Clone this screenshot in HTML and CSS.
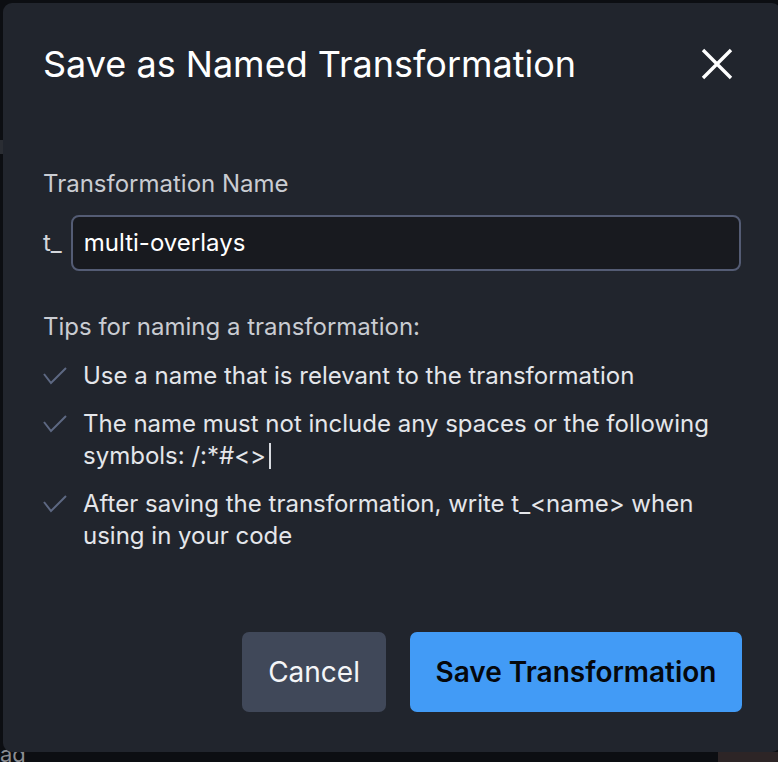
FILE: index.html
```html
<!DOCTYPE html>
<html lang="en">
<head>
<meta charset="utf-8">
<title>Save as Named Transformation</title>
<link rel="stylesheet" href="styles.css">
</head>
<body>
<div class="backdrop">
  <div class="bg-strip"></div>
  <div class="bg-text">ad</div>
  <div class="bg-block"></div>
</div>
<div class="modal" role="dialog" aria-labelledby="dlg-title">
  <div class="modal-header">
    <h1 id="dlg-title" class="modal-title">Save as Named Transformation</h1>
    <button class="close-btn" aria-label="Close">
      <svg viewBox="0 0 32 32" width="32" height="32"><path d="M2 2 L30 30 M30 2 L2 30" stroke="#ffffff" stroke-width="3.4" fill="none"/></svg>
    </button>
  </div>
  <label class="field-label" for="tname">Transformation Name</label>
  <div class="field-row">
    <span class="prefix">t_</span>
    <div class="input-box" id="tname">multi-overlays</div>
  </div>
  <div class="tips-title">Tips for naming a transformation:</div>
  <ul class="tips">
    <li class="tip">
      <svg class="check" viewBox="0 0 24 20" width="24" height="20"><polyline points="1,8 8,17 23,2" fill="none" stroke="#5d6882" stroke-width="2"/></svg>
      <span class="tip-text">Use a name that is relevant to the transformation</span>
    </li>
    <li class="tip">
      <svg class="check" viewBox="0 0 24 20" width="24" height="20"><polyline points="1,8 8,17 23,2" fill="none" stroke="#5d6882" stroke-width="2"/></svg>
      <span class="tip-text">The name must not include any spaces or the following symbols: /:*#&lt;&gt;<span class="caret"></span></span>
    </li>
    <li class="tip">
      <svg class="check" viewBox="0 0 24 20" width="24" height="20"><polyline points="1,8 8,17 23,2" fill="none" stroke="#5d6882" stroke-width="2"/></svg>
      <span class="tip-text">After saving the transformation, write t_&lt;name&gt; when using in your code</span>
    </li>
  </ul>
  <div class="modal-footer">
    <button class="btn btn-cancel">Cancel</button>
    <button class="btn btn-save">Save Transformation</button>
  </div>
</div>
</body>
</html>
```

FILE: styles.css
```css
html, body {
  margin: 0;
  padding: 0;
  width: 778px;
  height: 762px;
  overflow: hidden;
  background: #0c0e12;
  font-family: Inter, "Noto Sans", "Liberation Sans", sans-serif;
}

.backdrop {
  position: relative;
  width: 778px;
  height: 762px;
}

.bg-strip {
  position: absolute;
  left: 0;
  top: 140px;
  width: 3px;
  height: 14px;
  background: #2a2d33;
}

.bg-text {
  position: absolute;
  left: 0;
  top: 741px;
  font-size: 22px;
  line-height: 26px;
  color: #8a8d93;
}

.bg-block {
  position: absolute;
  left: 718px;
  top: 752px;
  width: 60px;
  height: 10px;
  background: #2d2526;
}

.modal {
  position: absolute;
  left: 3px;
  top: 3px;
  width: 778px;
  height: 749px;
  box-sizing: border-box;
  padding: 40px;
  background: #21252d;
  border-radius: 9px;
  display: flex;
  flex-direction: column;
}

.modal-header {
  display: flex;
  align-items: center;
  justify-content: space-between;
  margin-bottom: 83px;
}

.modal-title {
  margin: 0;
  font-size: 36px;
  line-height: 42px;
  font-weight: 400;
  color: #ffffff;
}

.close-btn {
  width: 32px;
  height: 32px;
  padding: 0;
  margin-right: 8px;
  border: 0;
  background: transparent;
  display: flex;
}

.field-label {
  display: block;
  font-size: 24px;
  line-height: 32px;
  color: #c9ccd2;
  margin-bottom: 15px;
}

.field-row {
  display: flex;
  align-items: center;
  gap: 9px;
}

.prefix {
  font-size: 24px;
  line-height: 32px;
  color: #d4d7dc;
}

.input-box {
  flex: 1;
  height: 56px;
  box-sizing: border-box;
  border: 2px solid #545c74;
  border-radius: 8px;
  background: #181a1f;
  padding: 0 11px;
  display: flex;
  align-items: center;
  font-size: 24px;
  line-height: 32px;
  color: #ffffff;
}

.tips-title {
  margin-top: 40px;
  font-size: 24px;
  line-height: 32px;
  color: #c9ccd2;
}

.tips {
  list-style: none;
  margin: 17px 0 0;
  padding: 0;
  display: flex;
  flex-direction: column;
  gap: 16px;
}

.tip {
  display: flex;
  align-items: flex-start;
  gap: 16px;
}

.check {
  flex: none;
  margin-top: 6px;
}

.tip-text {
  font-size: 24px;
  line-height: 32px;
  color: #e4e6ea;
}

.caret {
  display: inline-block;
  width: 2px;
  height: 26px;
  margin-left: 3px;
  background: #d8dbe0;
  vertical-align: -5px;
}

.modal-footer {
  margin-top: auto;
  margin-right: -1px;
  display: flex;
  justify-content: flex-end;
  gap: 24px;
}

.btn {
  height: 80px;
  border: 0;
  border-radius: 7px;
  padding: 0 26px;
  font-family: Inter, "Noto Sans", "Liberation Sans", sans-serif;
  font-size: 28px;
  cursor: pointer;
}

.btn-cancel {
  background: #404859;
  color: #f4f5f7;
  font-weight: 400;
}

.btn-save {
  background: #429bf6;
  color: #05080c;
  font-weight: 600;
  padding: 0 25.5px;
}
```
